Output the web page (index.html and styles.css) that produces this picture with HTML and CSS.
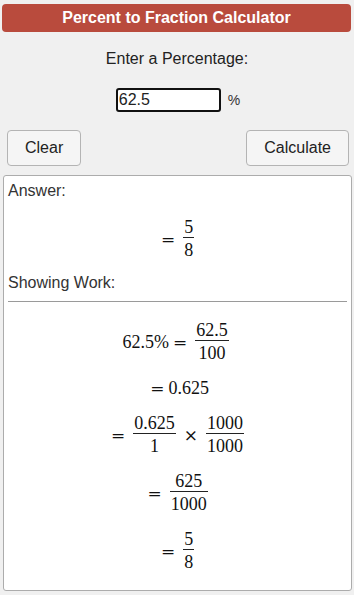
FILE: index.html
```html
<!DOCTYPE html>
<html>
<head>
<meta charset="utf-8">
<title>Percent to Fraction Calculator</title>
<link rel="stylesheet" href="styles.css">
</head>
<body>
<div class="wrap">
  <div class="header">Percent to Fraction Calculator</div>
  <div class="prompt">Enter a Percentage:</div>
  <div class="input-row">
    <input class="field" type="text" value="62.5">
    <span class="pct">%</span>
  </div>
  <div class="buttons">
    <button class="btn">Clear</button>
    <button class="btn">Calculate</button>
  </div>
  <div class="answer">
    <div class="label">Answer:</div>
    <div class="mrow result">
      <span class="rel">=</span>
      <span class="frac"><span class="num">5</span><span class="bar"></span><span class="den">8</span></span>
    </div>
    <div class="label work">Showing Work:</div>
    <div class="rule"></div>
    <div class="steps">
      <div class="mrow">
        <span class="mtext">62.5%</span>
        <span class="rel">=</span>
        <span class="frac"><span class="num">62.5</span><span class="bar"></span><span class="den">100</span></span>
      </div>
      <div class="mrow">
        <span class="rel">=</span>
        <span class="mtext">0.625</span>
      </div>
      <div class="mrow">
        <span class="rel">=</span>
        <span class="frac"><span class="num">0.625</span><span class="bar"></span><span class="den">1</span></span>
        <span class="bin">×</span>
        <span class="frac"><span class="num">1000</span><span class="bar"></span><span class="den">1000</span></span>
      </div>
      <div class="mrow">
        <span class="rel">=</span>
        <span class="frac"><span class="num">625</span><span class="bar"></span><span class="den">1000</span></span>
      </div>
      <div class="mrow">
        <span class="rel">=</span>
        <span class="frac"><span class="num">5</span><span class="bar"></span><span class="den">8</span></span>
      </div>
    </div>
  </div>
</div>
</body>
</html>
```

FILE: styles.css
```css
html, body {
  margin: 0;
  padding: 0;
  background: #f0f0f0;
}
body {
  font-family: "Liberation Sans", Arial, sans-serif;
  color: #222;
}
.wrap {
  padding: 4px 2px 0 2px;
}
.header {
  height: 28px;
  line-height: 28px;
  margin-right: 1px;
  background: #b94b3d;
  color: #fff;
  font-weight: bold;
  font-size: 16px;
  text-align: center;
  border-radius: 4px;
}
.prompt {
  margin-top: 18px;
  text-align: center;
  font-size: 16px;
  line-height: 18px;
  color: #222;
}
.input-row {
  margin-top: 20px;
  display: flex;
  justify-content: center;
  align-items: center;
  padding-left: 2px;
}
.field {
  box-sizing: border-box;
  width: 105px;
  height: 24px;
  margin: 0;
  padding: 0 1px;
  border: 2px solid #111;
  border-radius: 3px;
  background: #fff;
  font-family: "Liberation Sans", Arial, sans-serif;
  font-size: 16px;
  line-height: 20px;
  color: #222;
  outline: none;
}
.pct {
  margin-left: 7px;
  font-size: 14px;
  color: #333;
}
.buttons {
  margin-top: 18px;
  display: flex;
  justify-content: space-between;
  padding: 0 3px 0 5px;
}
.btn {
  box-sizing: border-box;
  height: 36px;
  margin: 0;
  padding: 0 17px;
  border: 1px solid #b4b4b4;
  border-radius: 4px;
  background: #f5f5f5;
  font-family: "Liberation Sans", Arial, sans-serif;
  font-size: 16px;
  color: #222;
}
.answer {
  margin: 9px 0 0 1px;
  background: #fff;
  border: 1px solid #acacac;
  border-radius: 3px;
  padding: 6px 4px 18px 4px;
}
.label {
  font-size: 16px;
  line-height: 18px;
  color: #333;
}
.label.work {
  margin-top: 14px;
}
.rule {
  margin-top: 9px;
  border-top: 1px solid #9a9a9a;
}
.steps {
  margin-top: 18px;
  display: flex;
  flex-direction: column;
  gap: 15px;
}
.mrow {
  display: flex;
  justify-content: center;
  align-items: center;
  font-family: "Liberation Serif", "Times New Roman", serif;
  font-size: 18px;
  line-height: 20px;
  color: #111;
}
.result {
  margin-top: 17px;
}
.mtext {
  white-space: nowrap;
}
.rel, .bin {
  font-family: "DejaVu Serif", serif;
  font-size: 17px;
  line-height: 20px;
}
.rel {
  margin: 0 4px;
}
.bin {
  margin: 0 4px;
}
.frac {
  display: inline-flex;
  flex-direction: column;
  align-items: stretch;
  text-align: center;
  margin: 0 4px;
}
.num, .den {
  display: block;
  padding: 0 1px;
  line-height: 20px;
}
.bar {
  display: block;
  height: 1px;
  background: #222;
}
.den {
  padding-top: 2px;
}
```
